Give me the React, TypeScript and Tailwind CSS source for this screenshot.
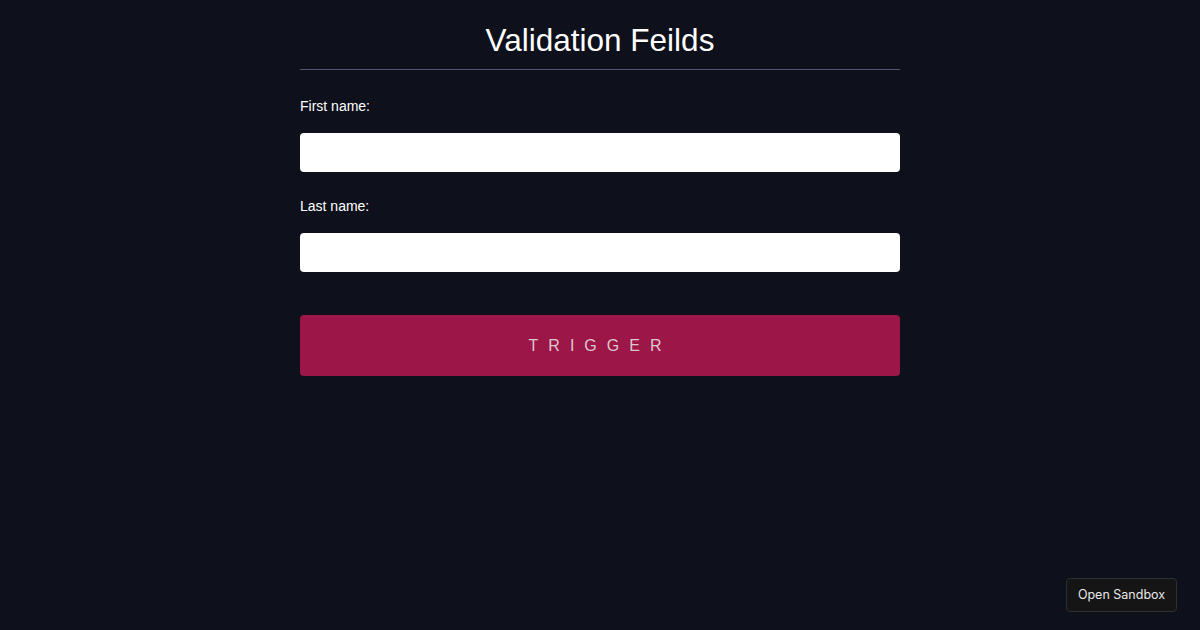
export default function App() {
  return (
    <div className="relative min-h-[630px] w-full bg-[#0e101c] font-['Liberation_Sans',Arial,sans-serif] text-white">
      <div className="mx-auto flex w-[600px] flex-col pt-[22px]">
        <h1 className="text-center text-[31.5px] font-thin leading-[36px] text-white">Validation Feilds</h1>
        <hr className="mt-[11px] border-0 border-t border-[#4f5572]" />
        <form className="flex flex-col" onSubmit={(e) => e.preventDefault()}>
          <label className="mt-[26px] text-[14px] leading-[20px]">First name:</label>
          <input className="mt-[17px] h-[39px] w-full rounded-[4px] bg-white px-3 text-[14px] text-black outline-none" />
          <label className="mt-[24px] text-[14px] leading-[20px]">Last name:</label>
          <input className="mt-[17px] h-[39px] w-full rounded-[4px] bg-white px-3 text-[14px] text-black outline-none" />
          <button
            type="submit"
            className="mt-[43px] h-[61px] w-full rounded-[4px] bg-[#9c1647] text-[16px] uppercase tracking-[10px] text-[#dcc6cf]"
          >
            Trigger
          </button>
        </form>
      </div>
      <button className="absolute bottom-[18px] right-[23px] h-[34px] w-[111px] rounded-[4px] border border-[#2f2f2f] bg-[#151515] font-['Inter',sans-serif] text-[12.5px] text-[#e8e8e8]">
        Open Sandbox
      </button>
    </div>
  );
}
